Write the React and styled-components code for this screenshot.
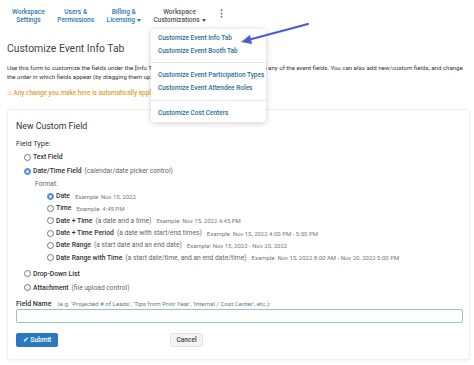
import styled, { createGlobalStyle } from "styled-components";

const GlobalStyle = createGlobalStyle`
    body {
        margin: 0;
        background: #fff;
        font-family: Roboto, "Liberation Sans", Arial, sans-serif;
        color: #333;
    }
`

const navItems = [
    { top: "Workspace", bottom: "Settings" },
    { top: "Users &", bottom: "Permissions" },
    { top: "Billing &", bottom: "Licensing", caret: true },
    { top: "Workspace", bottom: "Customizations", caret: true, active: true },
]

const menuGroups = [
    ["Customize Event Info Tab", "Customize Event Booth Tab"],
    ["Customize Event Participation Types", "Customize Event Attendee Roles"],
    ["Customize Cost Centers"],
]

const formats = [
    { label: "Date", example: "Example: Nov 15, 2022", checked: true },
    { label: "Time", example: "Example: 4:45 PM" },
    { label: "Date + Time", note: "(a date and a time)", example: "Example: Nov 15, 2022 4:45 PM" },
    { label: "Date + Time Period", note: "(a date with start/end times)", example: "Example: Nov 15, 2022 4:00 PM - 5:00 PM" },
    { label: "Date Range", note: "(a start date and an end date)", example: "Example: Nov 15, 2022 - Nov 20, 2022" },
    { label: "Date Range with Time", note: "(a start date/time, and an end date/time)", example: "Example: Nov 15, 2022 8:00 AM - Nov 20, 2022 5:00 PM" },
]

const Radio = ({ checked }) => <StyledRadio $checked={checked} />

const App = () => {
    return (
        <StyledPage>
            <GlobalStyle />
            <StyledNav>
                {navItems.map((item, i) => (
                    <StyledNavItem key={i} $active={item.active}>
                        <span>{item.top}</span>
                        <span>{item.bottom}{item.caret && <StyledCaret />}</span>
                    </StyledNavItem>
                ))}
                <StyledKebab width="3" height="9" viewBox="0 0 3 9">
                    <circle cx="1.5" cy="1.2" r="0.9" />
                    <circle cx="1.5" cy="4.5" r="0.9" />
                    <circle cx="1.5" cy="7.8" r="0.9" />
                </StyledKebab>
            </StyledNav>

            <StyledMenu>
                {menuGroups.map((group, gi) => (
                    <StyledMenuGroup key={gi}>
                        {group.map((label) => (
                            <StyledMenuItem key={label}>{label}</StyledMenuItem>
                        ))}
                    </StyledMenuGroup>
                ))}
            </StyledMenu>

            <StyledArrow width="72" height="28" viewBox="0 0 72 28">
                <line x1="68" y1="6" x2="8" y2="22" stroke="#4b5bd6" strokeWidth="2.2" strokeLinecap="round" />
                <polygon points="1,24 10,17 12,26" fill="#4b5bd6" />
            </StyledArrow>

            <StyledContent>
                <StyledTitle>Customize Event Info Tab</StyledTitle>
                <StyledIntro>
                    Use this form to customize the fields under the [Info Tab] of your events. You can rename or hide any of the event fields. You can also add new/custom fields, and change<br />
                    the order in which fields appear (by dragging them up or down in the list).
                </StyledIntro>
                <StyledWarning>⚠ Any change you make here is automatically applied to all of your events.</StyledWarning>

                <StyledCard>
                    <StyledCardTitle>New Custom Field</StyledCardTitle>
                    <StyledLabel>Field Type:</StyledLabel>
                    <StyledOptions>
                        <StyledOption><Radio /><b>Text Field</b></StyledOption>
                        <StyledOption><Radio checked /><b>Date/Time Field</b><StyledNote>(calendar/date picker control)</StyledNote></StyledOption>
                        <StyledFormat>
                            <StyledFormatLabel>Format:</StyledFormatLabel>
                            {formats.map((f) => (
                                <StyledSubOption key={f.label}>
                                    <Radio checked={f.checked} />
                                    <b>{f.label}</b>
                                    {f.note && <StyledNote>{f.note}</StyledNote>}
                                    <StyledExample>{f.example}</StyledExample>
                                </StyledSubOption>
                            ))}
                        </StyledFormat>
                        <StyledOption $spaced><Radio /><b>Drop-Down List</b></StyledOption>
                        <StyledOption><Radio /><b>Attachment</b><StyledNote>(file upload control)</StyledNote></StyledOption>
                    </StyledOptions>
                    <StyledFieldLabel>
                        <b>Field Name</b>
                        <StyledHint>(e.g. 'Projected # of Leads', 'Tips from Prior Year', 'Internal / Cost Center', etc.):</StyledHint>
                    </StyledFieldLabel>
                    <StyledInput type="text" />
                    <StyledActions>
                        <StyledSubmit>✔ Submit</StyledSubmit>
                        <StyledCancel>Cancel</StyledCancel>
                    </StyledActions>
                </StyledCard>
            </StyledContent>
        </StyledPage>
    )
}

const StyledPage = styled.div`
    position: relative;
    width: 474px;
    height: 365px;
    overflow: hidden;
`

const StyledNav = styled.div`
    display: flex;
    align-items: center;
    gap: 12.5px;
    height: 31px;
    padding: 1px 0 0 12px;
    box-sizing: border-box;
`

const StyledNavItem = styled.div`
    display: flex;
    flex-direction: column;
    align-items: center;
    font-size: 6.6px;
    line-height: 8px;
    font-weight: 500;
    color: ${(p) => (p.$active ? "#555" : "#2a79ac")};
`

const StyledCaret = styled.i`
    display: inline-block;
    margin-left: 2px;
    border-left: 2.5px solid transparent;
    border-right: 2.5px solid transparent;
    border-top: 3px solid currentColor;
    vertical-align: middle;
`

const StyledKebab = styled.svg`
    margin: -6px 0 0 2px;
    fill: #666;
`

const StyledMenu = styled.div`
    position: absolute;
    left: 151px;
    top: 29px;
    width: 115px;
    background: #fff;
    border-radius: 3px;
    box-shadow: 0 1px 6px rgba(0, 0, 0, 0.2);
    z-index: 5;
`

const StyledMenuGroup = styled.div`
    padding: 6px 0 4.5px;
    &:first-child { padding-top: 2.5px; }
    &:last-child { padding-bottom: 2.5px; }
    & + & {
        border-top: 1px solid #e6e6e6;
    }
`

const StyledMenuItem = styled.div`
    padding: 0 7px;
    font-size: 6.5px;
    line-height: 13px;
    font-weight: 500;
    color: #2b6f98;
    white-space: nowrap;
`

const StyledArrow = styled.svg`
    position: absolute;
    left: 240px;
    top: 18px;
    z-index: 6;
`

const StyledContent = styled.div`
    padding: 0 3px 0 7px;
`

const StyledTitle = styled.h1`
    margin: 11px 0 0;
    font-size: 10.4px;
    line-height: 13px;
    font-weight: 400;
    color: #444;
`

const StyledIntro = styled.p`
    margin: 9px 0 0;
    font-size: 6.1px;
    line-height: 8.5px;
    color: #333;
    white-space: nowrap;
`

const StyledWarning = styled.p`
    margin: 8px 0 0;
    font-size: 6.4px;
    line-height: 8px;
    font-weight: 500;
    color: #e0a133;
`

const StyledCard = styled.div`
    margin-top: 12px;
    width: 463px;
    box-sizing: border-box;
    padding: 10px 8px 12px 8px;
    border: 1px solid #eef0f2;
    border-radius: 3px;
    box-shadow: 0 1px 3px rgba(0, 0, 0, 0.06);
`

const StyledCardTitle = styled.div`
    font-size: 8.8px;
    line-height: 12px;
    color: #333;
`

const StyledLabel = styled.div`
    margin-top: 7px;
    font-size: 7.3px;
    line-height: 10px;
    color: #333;
`

const StyledOptions = styled.div`
    padding-left: 8px;
    margin-top: 1px;
`

const StyledOption = styled.div`
    display: flex;
    align-items: center;
    height: 14px;
    margin-top: ${(p) => (p.$spaced ? "3px" : "0")};
    font-size: 6.8px;
    color: #333;
    b { font-weight: 500; }
`

const StyledRadio = styled.span`
    width: 5px;
    height: 5px;
    margin-right: 2px;
    border-radius: 50%;
    border: ${(p) => (p.$checked ? "1.6px solid #2d7dd2" : "0.8px solid #777")};
    background: #fff;
    box-shadow: ${(p) => (p.$checked ? "inset 0 0 0 1px #2d7dd2" : "none")};
    flex-shrink: 0;
`

const StyledNote = styled.span`
    margin-left: 3px;
    color: #666;
    font-size: 6.7px;
`

const StyledExample = styled.span`
    margin-left: 5px;
    color: #777;
    font-size: 6px;
`

const StyledFormat = styled.div`
    padding-left: 11px;
`

const StyledFormatLabel = styled.div`
    font-size: 6.6px;
    line-height: 12px;
    color: #666;
`

const StyledSubOption = styled.div`
    display: flex;
    align-items: center;
    height: 12.3px;
    padding-left: 12px;
    font-size: 6.8px;
    color: #333;
    white-space: nowrap;
    b { font-weight: 500; }
`

const StyledFieldLabel = styled.div`
    margin-top: 5px;
    font-size: 7px;
    line-height: 9px;
    color: #333;
    b { font-weight: 500; }
`

const StyledHint = styled.span`
    margin-left: 6px;
    color: #777;
    font-size: 6.2px;
`

const StyledInput = styled.input`
    display: block;
    width: 447px;
    height: 14px;
    margin-top: 0;
    box-sizing: border-box;
    border: 1px solid #9bbfd6;
    border-radius: 2px;
    background: #fff;
    outline: none;
`

const StyledActions = styled.div`
    display: flex;
    align-items: center;
    gap: 112px;
    margin-top: 10px;
`

const StyledSubmit = styled.button`
    width: 42px;
    height: 14px;
    padding: 0;
    border: none;
    border-radius: 2px;
    background: #2b78c0;
    color: #fff;
    font-family: inherit;
    font-size: 6.6px;
    font-weight: 500;
`

const StyledCancel = styled.button`
    width: 33px;
    height: 14px;
    padding: 0;
    border: 1px solid #e2e2e2;
    border-radius: 2px;
    background: #f4f4f4;
    color: #444;
    font-family: inherit;
    font-size: 6.6px;
    font-weight: 500;
`

export default App;
